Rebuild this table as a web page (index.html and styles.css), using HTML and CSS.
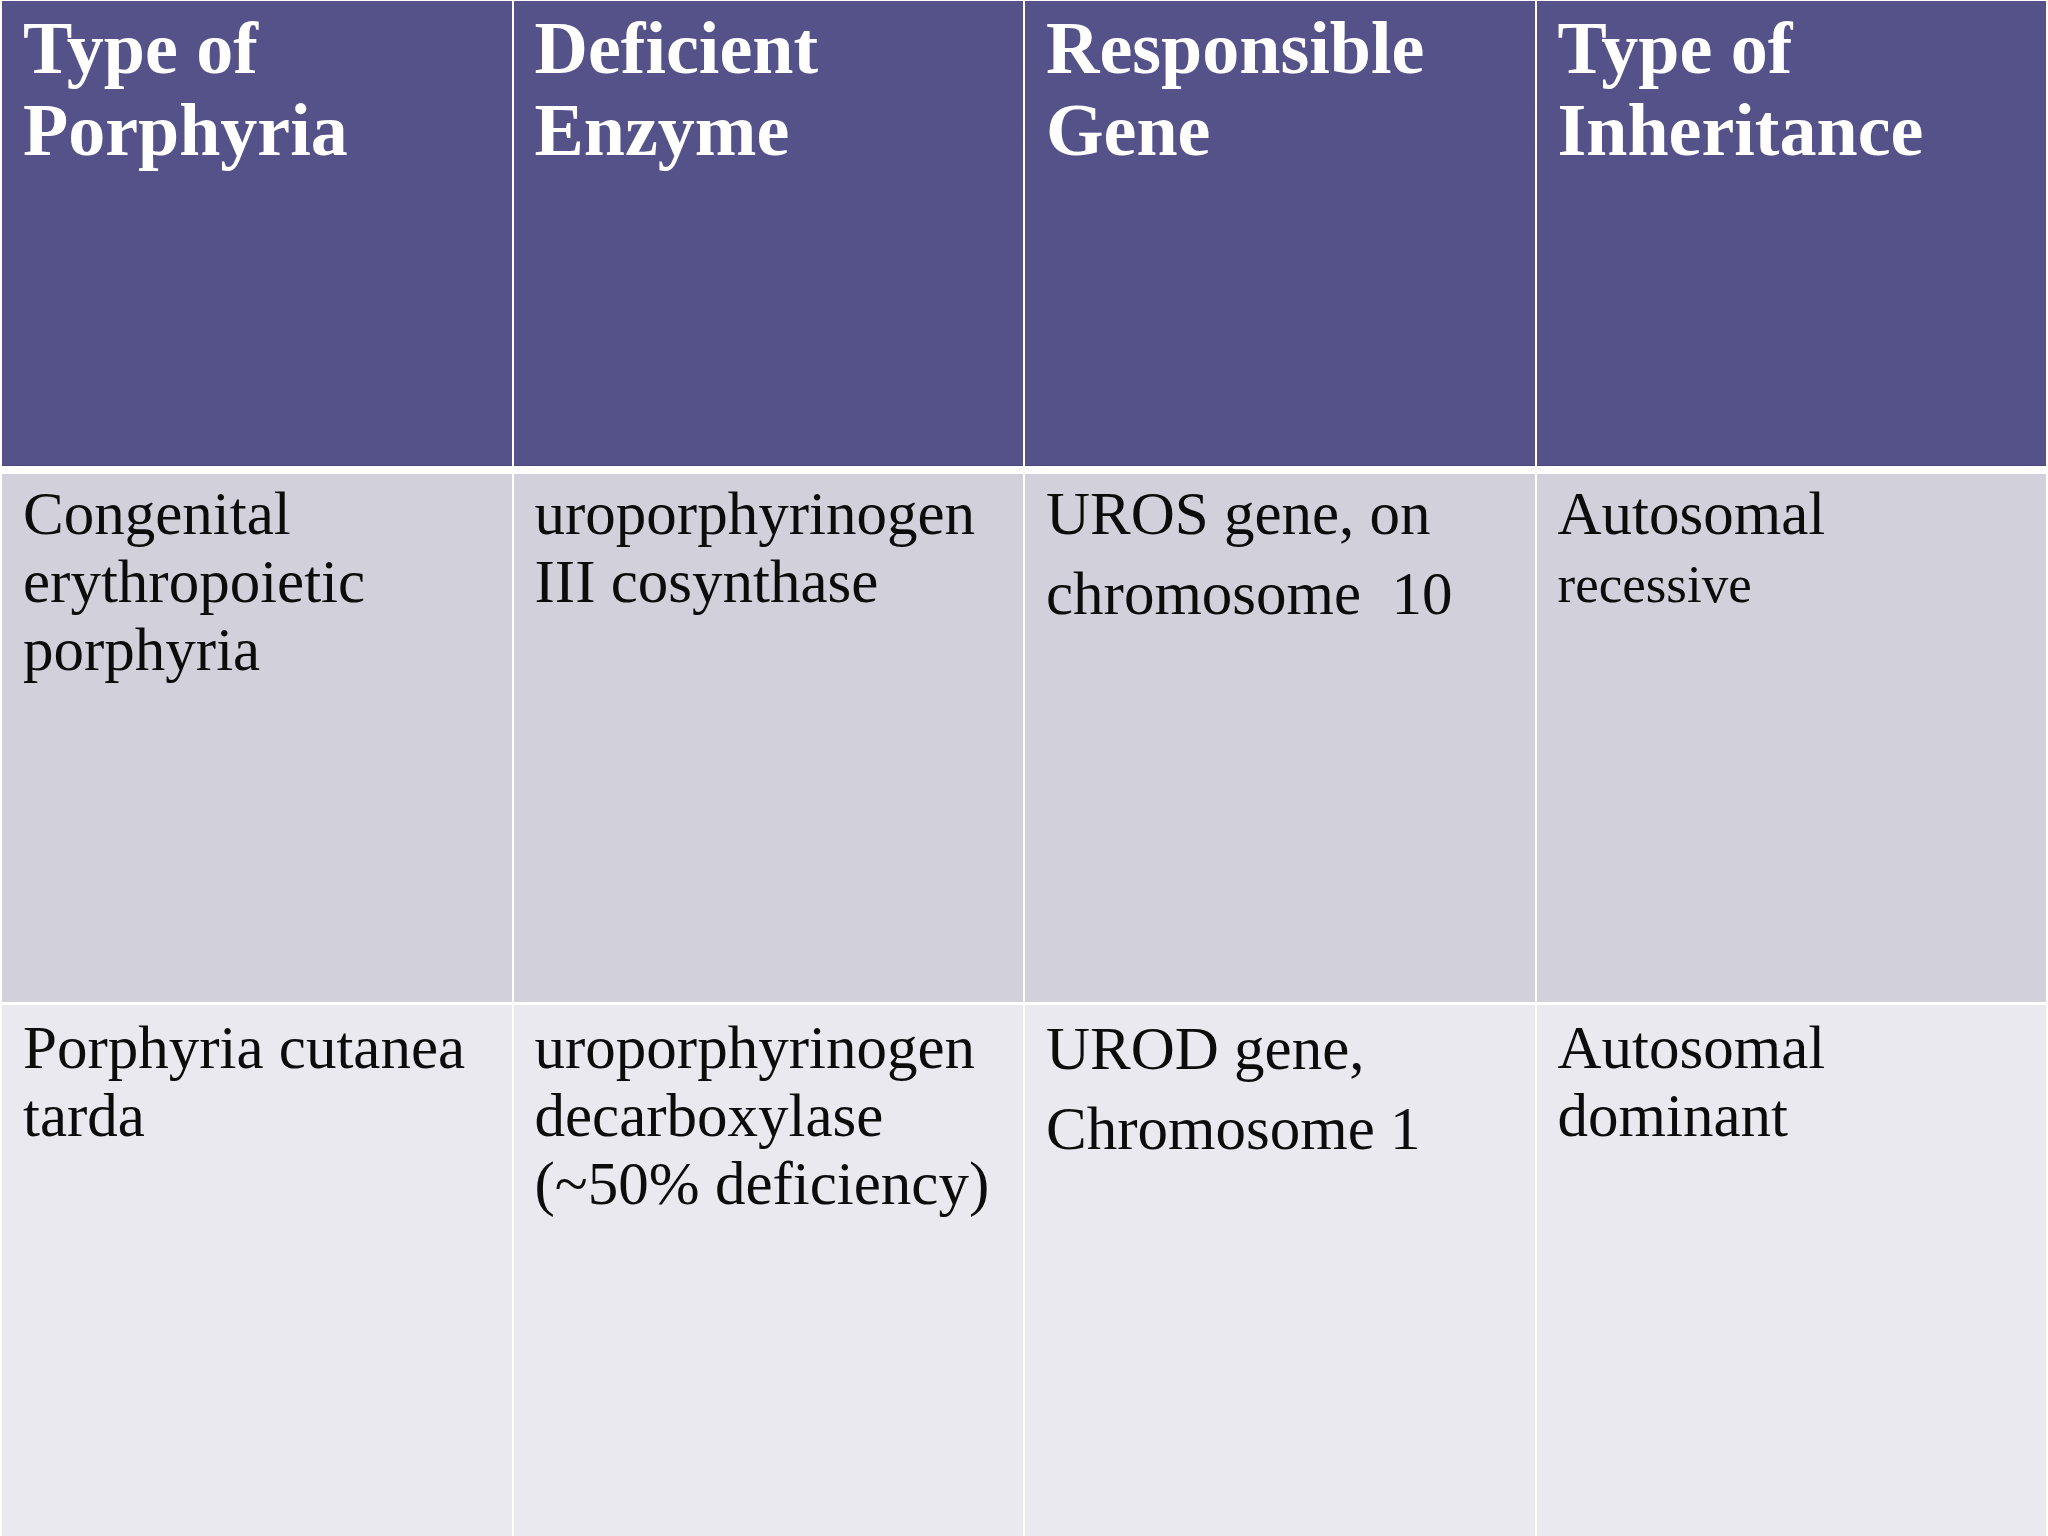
FILE: index.html
```html
<!DOCTYPE html>
<html lang="en">
<head>
<meta charset="utf-8">
<title>Porphyria table</title>
<link rel="stylesheet" href="styles.css">
</head>
<body>
<div class="table">
  <div class="row head">
    <div class="cell">Type of<br>Porphyria</div>
    <div class="cell">Deficient<br>Enzyme</div>
    <div class="cell">Responsible<br>Gene</div>
    <div class="cell">Type of<br>Inheritance</div>
  </div>
  <div class="row body-row odd">
    <div class="cell">Congenital<br>erythropoietic<br>porphyria</div>
    <div class="cell">uroporphyrinogen<br>III cosynthase</div>
    <div class="cell tall">UROS gene, on<br>chromosome&nbsp; 10</div>
    <div class="cell">Autosomal<br><span class="small">recessive</span></div>
  </div>
  <div class="row body-row even">
    <div class="cell">Porphyria cutanea<br>tarda</div>
    <div class="cell">uroporphyrinogen<br>decarboxylase<br>(~50% deficiency)</div>
    <div class="cell tall">UROD gene,<br>Chromosome 1</div>
    <div class="cell">Autosomal<br>dominant</div>
  </div>
</div>
</body>
</html>
```

FILE: styles.css
```css
html, body {
  margin: 0;
  padding: 0;
  background: #ffffff;
}

body {
  width: 2048px;
  height: 1536px;
  overflow: hidden;
  font-family: "Liberation Serif", "Times New Roman", serif;
}

.table {
  display: flex;
  flex-direction: column;
  height: 1536px;
  box-sizing: border-box;
  padding: 1px 2px 0 2px;
}

.row {
  display: grid;
  grid-template-columns: repeat(4, 1fr);
  column-gap: 2px;
}

.cell {
  box-sizing: border-box;
  padding-left: 21px;
  padding-right: 8px;
}

.head {
  height: 465px;
  margin-bottom: 8px;
}

.head .cell {
  background: #55528a;
  border-bottom: 1px solid #4a4780;
  color: #ffffff;
  font-weight: bold;
  font-size: 74px;
  line-height: 82px;
  padding-top: 6px;
}

.body-row .cell {
  color: #0c0c0c;
  font-size: 61px;
  line-height: 68px;
}

.odd {
  height: 528px;
  margin-bottom: 3px;
}

.odd .cell {
  background: #d2d1db;
  padding-top: 6px;
}

.even {
  flex: 1;
}

.even .cell {
  background: #eae9ef;
  padding-top: 9px;
}

.body-row .tall {
  line-height: 80px;
}

.odd .tall {
  padding-top: 0;
}

.even .tall {
  padding-top: 4px;
}

.small {
  font-size: 53px;
}
```
